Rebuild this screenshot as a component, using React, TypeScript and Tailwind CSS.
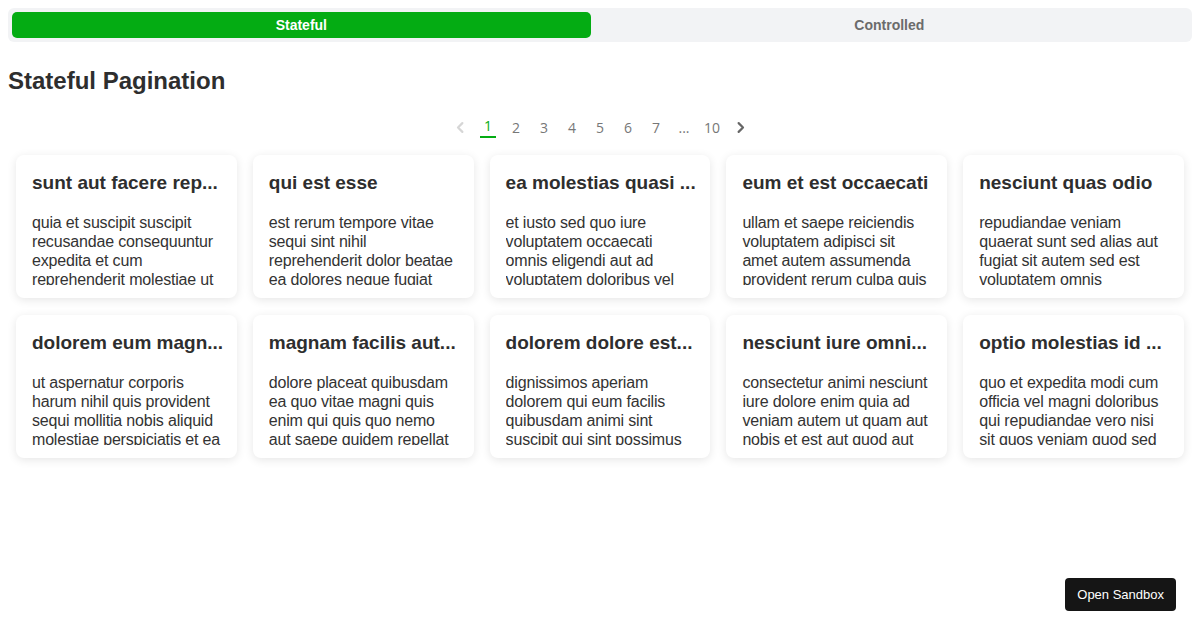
import { useLayoutEffect, useRef, useState } from "react";

const POSTS = [
  {
    title: "sunt aut facere repellat provident occaecati excepturi optio reprehenderit",
    body: "quia et suscipit suscipit recusandae consequuntur expedita et cum reprehenderit molestiae ut ut quas totam nostrum rerum est autem sunt rem eveniet architecto",
  },
  {
    title: "qui est esse",
    body: "est rerum tempore vitae sequi sint nihil reprehenderit dolor beatae ea dolores neque fugiat blanditiis voluptate porro vel nihil molestiae ut reiciendis qui aperiam non debitis possimus qui neque nisi nulla",
  },
  {
    title: "ea molestias quasi exercitationem repellat qui ipsa sit aut",
    body: "et iusto sed quo iure voluptatem occaecati omnis eligendi aut ad voluptatem doloribus vel accusantium quis pariatur molestiae porro eius odio et labore et velit aut",
  },
  {
    title: "eum et est occaecati",
    body: "ullam et saepe reiciendis voluptatem adipisci sit amet autem assumenda provident rerum culpa quis hic commodi nesciunt rem tenetur doloremque ipsam iure quis sunt voluptatem rerum illo velit",
  },
  {
    title: "nesciunt quas odio",
    body: "repudiandae veniam quaerat sunt sed alias aut fugiat sit autem sed est voluptatem omnis possimus esse voluptatibus quis est aut tenetur dolor neque",
  },
  {
    title: "dolorem eum magni eos aperiam quia",
    body: "ut aspernatur corporis harum nihil quis provident sequi mollitia nobis aliquid molestiae perspiciatis et ea nemo ab reprehenderit accusantium quas voluptate dolores velit et doloremque molestiae",
  },
  {
    title: "magnam facilis autem",
    body: "dolore placeat quibusdam ea quo vitae magni quis enim qui quis quo nemo aut saepe quidem repellat excepturi ut quia sunt ut sequi eos ea sed quas",
  },
  {
    title: "dolorem dolore est ipsam",
    body: "dignissimos aperiam dolorem qui eum facilis quibusdam animi sint suscipit qui sint possimus cum quaerat magni maiores excepturi ipsam ut commodi dolor voluptatum modi aut vitae",
  },
  {
    title: "nesciunt iure omnis dolorem tempora et accusantium",
    body: "consectetur animi nesciunt iure dolore enim quia ad veniam autem ut quam aut nobis et est aut quod aut provident voluptas autem voluptas",
  },
  {
    title: "optio molestias id quia eum",
    body: "quo et expedita modi cum officia vel magni doloribus qui repudiandae vero nisi sit quos veniam quod sed accusamus veritatis error",
  },
];

const PAGES = ["1", "2", "3", "4", "5", "6", "7", "...", "10"];

function Chevron({ dir, className }: { dir: "left" | "right"; className: string }) {
  return (
    <svg viewBox="0 0 24 24" className={className} fill="none" stroke="currentColor" strokeWidth={3.5} strokeLinecap="round" strokeLinejoin="round">
      {dir === "left" ? <path d="M15 5l-7 7 7 7" /> : <path d="M9 5l7 7-7 7" />}
    </svg>
  );
}

// cuts the title with "..." so it fits on one line (a few px of slack)
function Title({ text }: { text: string }) {
  const ref = useRef<HTMLHeadingElement>(null);
  const [shown, setShown] = useState(text);

  useLayoutEffect(() => {
    const el = ref.current;
    if (!el) return;
    const ctx = document.createElement("canvas").getContext("2d");
    if (!ctx) return;
    ctx.font = getComputedStyle(el).font;
    const max = el.getBoundingClientRect().width + 3;
    if (ctx.measureText(text).width <= max) {
      setShown(text);
      return;
    }
    let n = text.length;
    while (n > 0 && ctx.measureText(text.slice(0, n) + "...").width > max) n--;
    setShown(text.slice(0, n) + "...");
  }, [text]);

  return (
    <h3
      ref={ref}
      title={text}
      className="whitespace-nowrap text-[19px] font-bold leading-[24px] text-[#2e2e2e]"
    >
      {shown}
    </h3>
  );
}

export default function App() {
  const [tab, setTab] = useState("stateful");

  return (
    <div className="min-h-screen bg-white p-2 font-['Liberation_Sans',Arial,sans-serif] text-[#333]">
      <div className="flex rounded-md bg-[#f2f3f5] p-1">
        {[
          { id: "stateful", label: "Stateful" },
          { id: "controlled", label: "Controlled" },
        ].map((t) => (
          <button
            key={t.id}
            onClick={() => setTab(t.id)}
            className={[
              "h-[26px] flex-auto rounded-[5px] text-[14px] font-bold",
              tab === t.id ? "bg-[#04ac13] text-white" : "text-[#6b6b6b]",
            ].join(" ")}
          >
            {t.label}
          </button>
        ))}
      </div>

      <h2 className="mt-6 text-[24px] font-bold leading-[29px] text-[#2e2e2e]">
        Stateful Pagination
      </h2>

      <nav className="mt-[21px] flex justify-center font-['Open_Sans',sans-serif] text-[14px] text-[#777]">
        <span className="flex h-[22px] w-7 items-center justify-center text-[#d6d6d6]">
          <Chevron dir="left" className="h-[15px] w-[15px]" />
        </span>
        {PAGES.map((p) => (
          <span key={p} className="flex h-[22px] w-7 items-center justify-center">
            <span
              className={
                p === "1"
                  ? "w-4 border-b-2 border-[#04ac13] pb-[1px] text-center leading-[19px] text-[#04ac13]"
                  : "leading-[19px]"
              }
            >
              {p}
            </span>
          </span>
        ))}
        <span className="flex h-[22px] w-7 items-center justify-center text-[#666]">
          <Chevron dir="right" className="h-[15px] w-[15px]" />
        </span>
      </nav>

      <div className="mt-[17px] grid grid-cols-5 gap-x-4 gap-y-[17px] px-2">
        {POSTS.map((post) => (
          <article
            key={post.title}
            className="min-w-0 rounded-lg bg-white px-4 pt-4 pb-[13px] shadow-[0_2px_10px_rgba(0,0,0,0.1)]"
          >
            <Title text={post.title} />
            <p className="mt-[18px] h-[72px] overflow-hidden text-[16px] leading-[19px] tracking-[-0.011em] text-[#333]">
              {post.body}
            </p>
          </article>
        ))}
      </div>

      <button className="fixed right-6 bottom-[19px] h-[33px] rounded bg-[#151515] px-3 text-[13px] text-white">
        Open Sandbox
      </button>
    </div>
  );
}
